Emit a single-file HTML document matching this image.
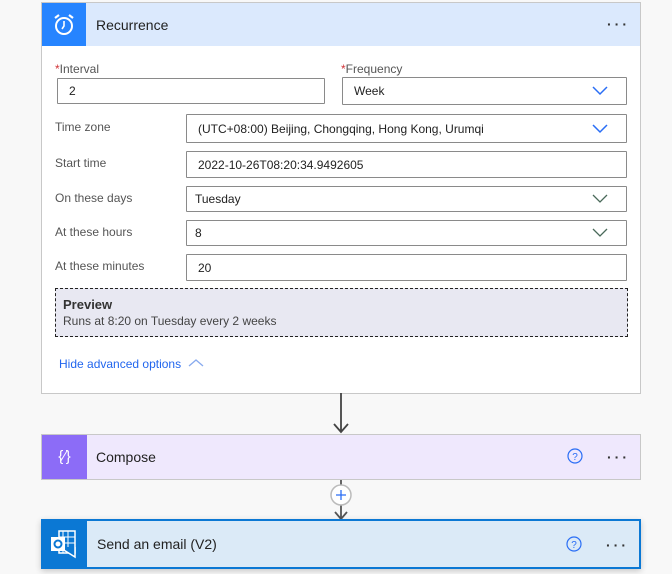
<!DOCTYPE html><html><head><style>
body{margin:0;width:672px;height:573px;background:#f8f8f8;font-family:"Liberation Sans",sans-serif;position:relative;overflow:hidden;color:#222}
.a{position:absolute;box-sizing:border-box}
.card{background:#fff;border:1px solid #c8c8c8}
.inp{border:1px solid #8a8a8a;background:#fff;font-size:12px;padding-left:11px;display:flex;align-items:center;border-radius:1px}
.lbl{font-size:12px;color:#555}
.dots{font-size:14px;letter-spacing:3px;color:#333;font-weight:bold}
.chev{position:absolute;right:18px;top:50%;margin-top:-5px}
</style></head><body>
<div class="a card" style="left:41px;top:2px;width:600px;height:392px"></div>
<div class="a" style="left:42px;top:3px;width:598px;height:43px;background:#dbe9fd"></div>
<div class="a" style="left:42px;top:3px;width:44px;height:43px;background:#2684ff">
<svg width="44" height="43" viewBox="0 0 44 43"><circle cx="22" cy="23" r="8" fill="none" stroke="#fff" stroke-width="2"/><path d="M22 18v5l-2 3" stroke="#fff" stroke-width="1.6" fill="none"/><path d="M13 15l4-3M31 15l-4-3" stroke="#fff" stroke-width="2.2"/></svg></div>
<div class="a" style="left:96px;top:17px;font-size:14px">Recurrence</div>
<div class="a dots" style="left:607px;top:16px">···</div>
<div class="a lbl" style="left:55px;top:62px"><span style="color:#d13438">*</span>Interval</div>
<div class="a inp" style="left:57px;top:78px;width:268px;height:26px">2</div>
<div class="a lbl" style="left:341px;top:62px"><span style="color:#d13438">*</span>Frequency</div>
<div class="a inp" style="left:342px;top:77px;width:285px;height:28px">Week<svg class="chev" width="16" height="10"><path d="M1 1l7 7 7-7" stroke="#2a6ef5" stroke-width="1.5" fill="none"/></svg></div>
<div class="a lbl" style="left:55px;top:120px">Time zone</div>
<div class="a inp" style="left:186px;top:114px;width:441px;height:29px">(UTC+08:00) Beijing, Chongqing, Hong Kong, Urumqi<svg class="chev" width="16" height="10"><path d="M1 1l7 7 7-7" stroke="#2a6ef5" stroke-width="1.5" fill="none"/></svg></div>
<div class="a lbl" style="left:55px;top:156px">Start time</div>
<div class="a inp" style="left:186px;top:151px;width:441px;height:27px">2022-10-26T08:20:34.9492605</div>
<div class="a lbl" style="left:55px;top:191px">On these days</div>
<div class="a inp" style="left:186px;top:186px;width:441px;height:26px;padding-left:8px">Tuesday<svg class="chev" width="16" height="10"><path d="M1 1l7 7 7-7" stroke="#4a6a5a" stroke-width="1.3" fill="none"/></svg></div>
<div class="a lbl" style="left:55px;top:225px">At these hours</div>
<div class="a inp" style="left:186px;top:220px;width:441px;height:26px;padding-left:8px">8<svg class="chev" width="16" height="10"><path d="M1 1l7 7 7-7" stroke="#4a6a5a" stroke-width="1.3" fill="none"/></svg></div>
<div class="a lbl" style="left:55px;top:259px">At these minutes</div>
<div class="a inp" style="left:186px;top:254px;width:441px;height:27px">20</div>
<div class="a" style="left:55px;top:288px;width:573px;height:49px;background:#e8e8f2;border:1px dashed #222;padding:8px 0 0 7px">
<div style="font-size:13px;font-weight:bold;color:#333">Preview</div>
<div style="font-size:12px;color:#444;margin-top:2px">Runs at 8:20 on Tuesday every 2 weeks</div></div>
<div class="a" style="left:59px;top:357px;font-size:12px;color:#2266ee">Hide advanced options</div>
<svg class="a" style="left:188px;top:358px" width="16" height="10"><path d="M1 8l7-6 7 6" stroke="#88aaee" stroke-width="1.3" fill="none"/></svg>
<svg class="a" style="left:330px;top:393px" width="22" height="132"><path d="M11 0v39M4 31l7 8 7-8" stroke="#444" stroke-width="1.8" fill="none"/><path d="M11 86v8M11 112v14M5 119l6 7 6-7" stroke="#555" stroke-width="1.8" fill="none"/><circle cx="11" cy="102" r="10" fill="#fff" stroke="#bbb" stroke-width="1.5"/><path d="M11 97v10M6 102h10" stroke="#2a6ef5" stroke-width="1.3"/></svg>
<div class="a" style="left:41px;top:434px;width:600px;height:46px;background:#efe8fd;border:1px solid #c8c8c8"></div>
<div class="a" style="left:42px;top:435px;width:45px;height:44px;background:#8c6cf7;color:#fff;font-size:15px;text-align:center;line-height:44px">{∕}</div>
<div class="a" style="left:96px;top:449px;font-size:14px">Compose</div>
<svg class="a" style="left:567px;top:448px" width="16" height="16"><circle cx="8" cy="8" r="7" fill="none" stroke="#2a6ef5" stroke-width="1.2"/><text x="8" y="12" font-size="10" text-anchor="middle" fill="#2a6ef5" font-family="Liberation Sans">?</text></svg>
<div class="a dots" style="left:607px;top:449px">···</div>
<div class="a" style="left:41px;top:519px;width:600px;height:50px;background:#dbeaf7;border:2px solid #0b78d4;box-shadow:0 2px 6px rgba(0,0,0,.2)"></div>
<div class="a" style="left:41px;top:519px;width:46px;height:50px;background:#0b78d4">
<svg width="46" height="50" viewBox="0 0 46 50"><rect x="18" y="12" width="16" height="22" fill="none" stroke="#fff" stroke-width="1.5"/><path d="M22 12v22M27 12v22M18 18h16M18 24h16" stroke="#fff" stroke-width="1"/><path d="M18 28l16 10V28" fill="#0b78d4" stroke="#fff" stroke-width="1.5"/><rect x="10" y="18" width="14" height="14" fill="#fff"/><circle cx="17" cy="25" r="3.5" fill="none" stroke="#0b78d4" stroke-width="2"/></svg></div>
<div class="a" style="left:97px;top:536px;font-size:14px">Send an email (V2)</div>
<svg class="a" style="left:566px;top:536px" width="16" height="16"><circle cx="8" cy="8" r="7" fill="none" stroke="#2a6ef5" stroke-width="1.2"/><text x="8" y="12" font-size="10" text-anchor="middle" fill="#2a6ef5" font-family="Liberation Sans">?</text></svg>
<div class="a dots" style="left:606px;top:537px">···</div>
</body></html>
